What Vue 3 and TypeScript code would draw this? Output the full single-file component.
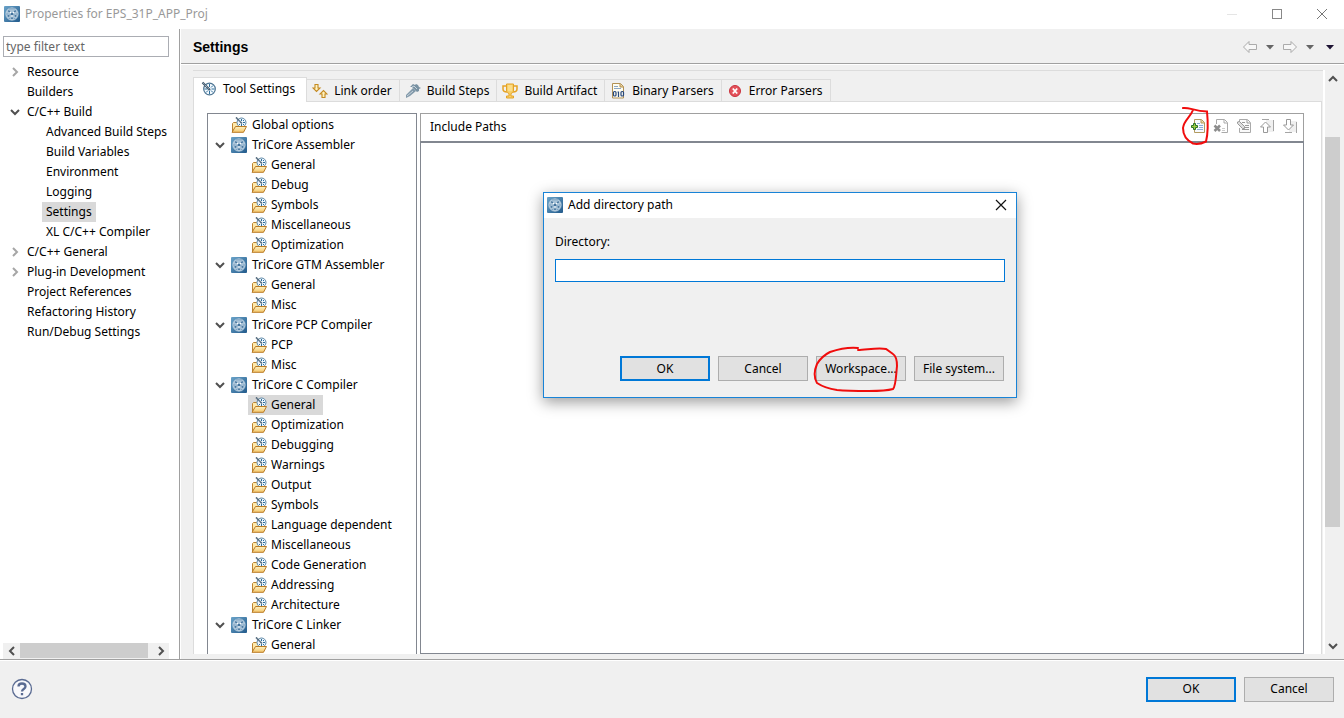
<script setup lang="ts">
import { ref } from 'vue'

interface NavItem {
  label: string
  level: 0 | 1
  state?: 'open' | 'closed'
}

interface ToolItem {
  label: string
  kind: 'root' | 'tool' | 'option'
  key: string
}

const navItems: NavItem[] = [
  { label: 'Resource', level: 0, state: 'closed' },
  { label: 'Builders', level: 0 },
  { label: 'C/C++ Build', level: 0, state: 'open' },
  { label: 'Advanced Build Steps', level: 1 },
  { label: 'Build Variables', level: 1 },
  { label: 'Environment', level: 1 },
  { label: 'Logging', level: 1 },
  { label: 'Settings', level: 1 },
  { label: 'XL C/C++ Compiler', level: 1 },
  { label: 'C/C++ General', level: 0, state: 'closed' },
  { label: 'Plug-in Development', level: 0, state: 'closed' },
  { label: 'Project References', level: 0 },
  { label: 'Refactoring History', level: 0 },
  { label: 'Run/Debug Settings', level: 0 },
]

const groups: [string, string[]][] = [
  ['TriCore Assembler', ['General', 'Debug', 'Symbols', 'Miscellaneous', 'Optimization']],
  ['TriCore GTM Assembler', ['General', 'Misc']],
  ['TriCore PCP Compiler', ['PCP', 'Misc']],
  [
    'TriCore C Compiler',
    [
      'General',
      'Optimization',
      'Debugging',
      'Warnings',
      'Output',
      'Symbols',
      'Language dependent',
      'Miscellaneous',
      'Code Generation',
      'Addressing',
      'Architecture',
    ],
  ],
  ['TriCore C Linker', ['General']],
]

const toolItems: ToolItem[] = [{ label: 'Global options', kind: 'root', key: 'global' }]
for (const [tool, options] of groups) {
  toolItems.push({ label: tool, kind: 'tool', key: tool })
  for (const option of options) {
    toolItems.push({ label: option, kind: 'option', key: `${tool}/${option}` })
  }
}

const tabs = [
  { label: 'Tool Settings', icon: 'gauge' },
  { label: 'Link order', icon: 'link-order' },
  { label: 'Build Steps', icon: 'steps' },
  { label: 'Build Artifact', icon: 'trophy' },
  { label: 'Binary Parsers', icon: 'binary' },
  { label: 'Error Parsers', icon: 'error' },
]

const pathActions = [
  { label: 'Add', icon: 'add', disabled: false },
  { label: 'Delete', icon: 'delete', disabled: true },
  { label: 'Edit', icon: 'edit', disabled: true },
  { label: 'Move up', icon: 'move-up', disabled: true },
  { label: 'Move down', icon: 'move-down', disabled: true },
]

const filter = ref('')
const directory = ref('')
const selectedPage = ref('Settings')
const selectedTool = ref('TriCore C Compiler/General')
const activeTab = ref('Tool Settings')
</script>

<template>
  <div class="window">
    <svg class="symbols" aria-hidden="true">
      <defs>
        <linearGradient id="chip-bg" x1="0" y1="0" x2="1" y2="1">
          <stop offset="0" stop-color="#6aa3c9" />
          <stop offset="1" stop-color="#225a8b" />
        </linearGradient>
        <linearGradient id="folder-bg" x1="0" y1="0" x2="0" y2="1">
          <stop offset="0" stop-color="#fff3c4" />
          <stop offset="1" stop-color="#f3c568" />
        </linearGradient>
      </defs>
      <symbol id="chip" viewBox="0 0 16 16">
        <rect width="16" height="16" rx="1" fill="url(#chip-bg)" />
        <circle cx="8" cy="8" r="6.2" fill="#a9c3d8" stroke="#c3d6e4" stroke-width=".7" />
        <g fill="none" stroke="#7fa3c2" stroke-width="1">
          <path d="M8 8 4 4M8 8l4-4M8 8l5 2M8 8l-5 2M8 8v5" />
          <path d="M5 2.8h6M2.2 8h2M12 8h2M4.5 13l2-1M11.500 13l-2-1" />
        </g>
        <g fill="#2f628f">
          <circle cx="8" cy="8" r="1" /><circle cx="5" cy="5.3" r=".8" /><circle cx="11" cy="5.3" r=".8" />
          <circle cx="4.6" cy="10" r=".8" /><circle cx="11.4" cy="10" r=".8" /><circle cx="8" cy="12.2" r=".8" />
        </g>
        <path d="M6 6.500h1M9 6.500h1M7 10h2" stroke="#fff" />
      </symbol>
      <symbol id="gauge" viewBox="0 0 16 16">
        <circle cx="8.500" cy="8" r="5.800" fill="#f4faff" stroke="#4e7593" stroke-width="1.200" />
        <path d="M8.500 3v3M8.500 10v3M3.500 8h3M10.500 8h3M5 11.500l2-2M12 4.500l-2 2M12 11.500l-2-2" stroke="#2f6f9b" stroke-width="1" />
        <path d="M1.500 1.500 9 9" stroke="#41586c" stroke-width="2.200" />
        <path d="M2.500 2.500 8 8" stroke="#dbe8f2" stroke-width="1" stroke-dasharray="1 1" />
      </symbol>
      <symbol id="folder" viewBox="0 0 16 16">
        <path d="M1.500 14V6.500l1-1h3l1 1H13V14z" fill="#ffe9ab" stroke="#ba8330" />
        <circle cx="10.500" cy="5.500" r="4.500" fill="#eef7ff" stroke="#5c86a5" stroke-width="1" />
        <path d="M10.500 2v2M10.500 7v2M12 5.500h2M13 3l-1 1M13 8l-1-1M8 8l1-1" stroke="#2f6f9b" />
        <path d="m5 .500 6 6" stroke="#41586c" stroke-width="1.600" />
        <path d="m6 1.500 5 5" stroke="#dbe8f2" stroke-width=".8" stroke-dasharray="1 1" />
        <path d="M1 15.300 4.500 9.500h11l-3 5.800z" fill="url(#folder-bg)" stroke="#ba7b25" />
      </symbol>
      <symbol id="link-order" viewBox="0 0 16 16">
        <g fill="#fff2bf" stroke="#c48a22" stroke-width="1.100">
          <path d="M3 1.500h3V5h2L4.500 8.500 1 5h2z" />
          <path d="M10 14.500h3V11h2l-3.500-3.500L8 11h2z" />
        </g>
      </symbol>
      <symbol id="steps" viewBox="0 0 16 16">
        <path d="M1 15v-3l7-7 3 3-6 5z" fill="#8299aa" />
        <path d="m5 4 3-3 2 1 1-1 2 1 1 2 2 1-2 1v2l-2 1-5-5z" fill="#7891a2" />
        <path d="m7 4 2-1 3 3M2 13l6-5" stroke="#c7d3dc" fill="none" />
      </symbol>
      <symbol id="trophy" viewBox="0 0 16 16">
        <path d="M4 3H1v3c0 2 1.500 3 4 3M12 3h3v3c0 2-1.500 3-4 3" fill="none" stroke="#e5a326" stroke-width="1.500" />
        <path d="M4.500 1h7v6c0 2-1 3-2.500 3.500V13h2.500v2h-7v-2H7v-2.500C5.500 10 4.500 9 4.500 7z" fill="#f7cf69" stroke="#e5a326" />
        <path d="M7 2v6M9 2v6" stroke="#ffebad" />
      </symbol>
      <symbol id="binary" viewBox="0 0 16 16">
        <path d="M2.500 15V.500h8l3 3V15z" fill="#fffdf0" stroke="#b29154" />
        <path d="M10 1v3h3.500" fill="#e6cc91" stroke="#b29154" />
        <path d="M4 3.500h4M4 5.500h7" stroke="#8aa6c7" />
        <g fill="none" stroke="#26477c" stroke-width="1.200">
          <rect x="3.500" y="8.500" width="2.500" height="4.500" rx="1" />
          <path d="M7.500 9h1v5" />
          <rect x="11" y="8.500" width="2.500" height="4.500" rx="1" />
        </g>
      </symbol>
      <symbol id="error" viewBox="0 0 16 16">
        <circle cx="8" cy="8" r="5.500" fill="#e4525b" stroke="#c9323d" />
        <path d="m5.800 5.500 4.400 5M10.200 5.500l-4.400 5" stroke="#fff" stroke-width="1.800" />
      </symbol>
      <symbol id="add" viewBox="0 0 16 16">
        <path d="M4.500 13.500V.500h7l3 3v10z" fill="#f7faff" stroke="#b29b60" />
        <path d="M11 1v3h3.500" fill="#eed79a" stroke="#b29b60" />
        <path d="M7 4.500h3M9 6.500h4M9 8.500h4M7 10.500h6" stroke="#8baed9" />
        <path d="M3.500 4.500h2v2h2v2h-2v2h-2v-2h-2v-2h2z" fill="#9ecb42" stroke="#287228" />
      </symbol>
      <symbol id="delete" viewBox="0 0 16 16">
        <path d="M3.500 5V.500h8l3 3v10h-6" fill="none" stroke="#aaa" />
        <path d="M11 1v3h3" fill="none" stroke="#aaa" />
        <path d="m1.500 6.500 5.500 5.500M7 6.500 1.500 12" stroke="#8d8d8d" stroke-width="2.500" />
        <path d="M9 9.500h3M9 11.500h3" stroke="#ccc" />
      </symbol>
      <symbol id="edit" viewBox="0 0 16 16">
        <path d="M3.500 3V.500h8l3 3v10h-11V9" fill="#fafafa" stroke="#aaa" />
        <path d="M11 1v3h3M6 3.500h3M9 6.500h4M9 8.500h4M6 10.500h7" fill="none" stroke="#999" />
        <path d="m1.500 3 2-.5 5 5v2h-2l-5-5z" fill="#ddd" stroke="#999" />
      </symbol>
      <symbol id="move-up" viewBox="0 0 16 16">
        <path d="M7 1h8v12H7z" fill="#f0f0f0" />
        <path d="M3 .500h7M14.500 1v11" stroke="#a5a5a5" />
        <path d="M4.500 13.500V8h-3l5-5 5 5h-3v5.500z" fill="#fff" stroke="#999" />
      </symbol>
      <symbol id="move-down" viewBox="0 0 16 16">
        <path d="M7 2h8v11H7z" fill="#f0f0f0" />
        <path d="M3 13.500h7M14.500 3v11" stroke="#a5a5a5" />
        <path d="M4.500 .500V6h-3l5 5 5-5h-3V.500z" fill="#fff" stroke="#999" />
      </symbol>
      <symbol id="chevron" viewBox="0 0 10 10">
        <path d="m1 3 4 4 4-4" fill="none" stroke="currentColor" stroke-width="2" />
      </symbol>
      <symbol id="arrow-left" viewBox="0 0 16 16">
        <path d="M1.500 8 7 2.500v3h7.500v5H7v3z" fill="#f7f7f7" stroke="#ababab" />
      </symbol>
      <symbol id="triangle" viewBox="0 0 10 6">
        <path d="M1 1h8L5 5.500z" fill="currentColor" />
      </symbol>
    </svg>

    <header class="title-bar">
      <svg class="icon"><use href="#chip" /></svg>
      <h1 class="window-title">Properties for EPS_31P_APP_Proj</h1>
      <div class="window-controls">
        <button class="plain control" aria-label="Minimize" disabled>
          <svg viewBox="0 0 12 12"><path d="M1 6.500h10" stroke="#e5e5e5" /></svg>
        </button>
        <button class="plain control" aria-label="Maximize">
          <svg viewBox="0 0 12 12"><rect x="1.500" y="1.500" width="9" height="9" fill="none" stroke="#888" /></svg>
        </button>
        <button class="plain control" aria-label="Close">
          <svg viewBox="0 0 12 12"><path d="m1 1 10 10M11 1 1 11" stroke="#777" /></svg>
        </button>
      </div>
    </header>

    <div class="body">
      <nav class="sidebar" aria-label="Property pages">
        <input v-model="filter" class="filter" type="text" placeholder="type filter text" aria-label="Filter pages" />
        <ul class="tree nav-tree">
          <li v-for="item in navItems" :key="item.label" class="row" :class="{ nested: item.level === 1 }">
            <span class="twist">
              <svg v-if="item.state" :class="['chevron', item.state]"><use href="#chevron" /></svg>
            </span>
            <button
              class="plain node"
              :class="{ selected: selectedPage === item.label }"
              @click="selectedPage = item.label"
            >
              {{ item.label }}
            </button>
          </li>
        </ul>
        <div class="h-scroll">
          <button class="plain scroll-button left" aria-label="Scroll left"><svg class="chevron"><use href="#chevron" /></svg></button>
          <div class="h-track"><div class="h-thumb"></div></div>
          <button class="plain scroll-button right" aria-label="Scroll right"><svg class="chevron"><use href="#chevron" /></svg></button>
        </div>
      </nav>

      <main class="main">
        <div class="page-header">
          <h2 class="page-title">Settings</h2>
          <div class="history">
            <button class="plain" aria-label="Back"><svg class="icon"><use href="#arrow-left" /></svg></button>
            <button class="plain drop" aria-label="Back history"><svg class="triangle"><use href="#triangle" /></svg></button>
            <button class="plain" aria-label="Forward"><svg class="icon flipped"><use href="#arrow-left" /></svg></button>
            <button class="plain drop" aria-label="Forward history"><svg class="triangle"><use href="#triangle" /></svg></button>
            <button class="plain drop menu" aria-label="View menu"><svg class="triangle"><use href="#triangle" /></svg></button>
          </div>
        </div>

        <div class="page-scroll">
          <div class="page">
            <div class="tabs" role="tablist">
              <button
                v-for="tab in tabs"
                :key="tab.label"
                class="plain tab"
                :class="{ active: activeTab === tab.label }"
                role="tab"
                :aria-selected="activeTab === tab.label"
                @click="activeTab = tab.label"
              >
                <svg class="icon"><use :href="'#' + tab.icon" /></svg>
                <span>{{ tab.label }}</span>
              </button>
              <div class="tab-rest"></div>
            </div>

            <div class="panel">
              <ul class="tree tool-tree">
                <li v-for="item in toolItems" :key="item.key" class="row" :class="{ nested: item.kind === 'option' }">
                  <span class="twist">
                    <svg v-if="item.kind === 'tool'" class="chevron open"><use href="#chevron" /></svg>
                  </span>
                  <button
                    class="plain node"
                    :class="{ selected: selectedTool === item.key }"
                    @click="selectedTool = item.key"
                  >
                    <svg class="icon"><use :href="item.kind === 'tool' ? '#chip' : '#folder'" /></svg>
                    <span>{{ item.label }}</span>
                  </button>
                </li>
              </ul>

              <section class="paths">
                <div class="paths-header">
                  <h3 class="paths-title">Include Paths</h3>
                  <div class="path-actions">
                    <button
                      v-for="action in pathActions"
                      :key="action.icon"
                      class="plain path-action"
                      :aria-label="action.label"
                      :disabled="action.disabled"
                    >
                      <svg class="icon"><use :href="'#' + action.icon" /></svg>
                      <svg v-if="action.icon === 'add'" class="mark mark-add" viewBox="0 0 32 44" aria-hidden="true">
                        <path d="M2 3C8 2 13 6 26 6.500c1 10 1 22-1 30-4 2-9 3-13 2C5 35 2 29 2 23 3 15 9 13 12 5" />
                      </svg>
                    </button>
                  </div>
                </div>
                <div class="paths-list"></div>
              </section>
            </div>
          </div>
          <div class="v-scroll">
            <button class="plain v-button up" aria-label="Scroll up"><svg class="chevron"><use href="#chevron" /></svg></button>
            <div class="v-track"><div class="v-thumb"></div></div>
            <button class="plain v-button" aria-label="Scroll down"><svg class="chevron"><use href="#chevron" /></svg></button>
          </div>
        </div>
      </main>
    </div>

    <footer class="footer">
      <button class="plain" aria-label="Help">
        <svg class="help" viewBox="0 0 22 22">
          <circle cx="11" cy="11" r="9.500" fill="#f8f8fb" stroke="#5a6b92" stroke-width="1.300" />
          <path d="M7.500 8.500c0-4 7-4 7 0 0 2.500-3.500 2.500-3.500 5M11 15v2.200" fill="none" stroke="#5a6b92" stroke-width="2.300" />
        </svg>
      </button>
      <div class="buttons">
        <button class="button primary">OK</button>
        <button class="button">Cancel</button>
      </div>
    </footer>

    <section class="dialog" role="dialog" aria-labelledby="dialog-title">
      <header class="dialog-bar">
        <svg class="icon"><use href="#chip" /></svg>
        <h2 id="dialog-title" class="dialog-title">Add directory path</h2>
        <button class="plain dialog-close" aria-label="Close dialog">
          <svg viewBox="0 0 12 12"><path d="m1 1 10 10M11 1 1 11" stroke="#111" stroke-width="1.200" /></svg>
        </button>
      </header>
      <div class="dialog-body">
        <label class="dialog-label" for="directory">Directory:</label>
        <input id="directory" v-model="directory" class="dialog-input" type="text" />
        <div class="buttons dialog-buttons">
          <button class="button primary">OK</button>
          <button class="button">Cancel</button>
          <button class="button workspace">
            Workspace...
            <svg class="mark mark-workspace" viewBox="0 0 90 50" aria-hidden="true">
              <path d="M46 3C36 2 27 4 18 7 12 10 8 14 5 19 2 26 2 33 5 38c6 4 13 6 20 7 10 1 22 1 32 1 9 0 17 0 24-2 3-3 3-14 4-23 0-5-1-10-4-12l-7-5c-8-2-20 1-28 1" />
            </svg>
          </button>
          <button class="button">File system...</button>
        </div>
      </div>
    </section>
  </div>
</template>

<style>
body {
  margin: 0;
}
</style>

<style scoped>
.window {
  position: relative;
  display: flex;
  flex-direction: column;
  height: 100vh;
  overflow: hidden;
  background: #f0f0f0;
  color: #000;
  font: 12px/20px "Noto Sans", "Open Sans", sans-serif;
}
.window * {
  box-sizing: border-box;
}
.symbols {
  position: absolute;
  width: 0;
  height: 0;
}
.plain {
  padding: 0;
  border: 0;
  background: none;
  color: inherit;
  font: inherit;
}
svg {
  display: block;
}
.icon {
  flex: none;
  width: 16px;
  height: 16px;
}
h1,
h2,
h3 {
  margin: 0;
  font: inherit;
}

.title-bar {
  display: flex;
  flex: none;
  align-items: center;
  height: 29px;
  padding: 0 0 2px 4px;
  background: #fff;
}
.window-title {
  margin-left: 5px;
  color: #999;
}
.window-controls {
  display: flex;
  margin-left: auto;
}
.control {
  display: grid;
  place-items: center;
  width: 45px;
  height: 26px;
}
.control svg {
  width: 12px;
  height: 12px;
}

.body {
  display: flex;
  flex: 1;
  min-height: 0;
}
.sidebar {
  display: flex;
  flex: none;
  flex-direction: column;
  width: 180px;
  padding: 7px 10px 0 3px;
  border-right: 1px solid #a0a0a0;
  background: #fff;
}
.filter {
  flex: none;
  width: 100%;
  height: 21px;
  margin-bottom: 5px;
  padding: 0 2px;
  border: 1px solid #abadb3;
  outline: none;
  background: #fff;
  font: inherit;
}
.filter::placeholder {
  color: #666;
  opacity: 1;
}
.tree {
  margin: 0;
  padding: 0;
  overflow: hidden;
  list-style: none;
}
.nav-tree {
  flex: 1;
  padding-left: 3px;
}
.row {
  display: flex;
  height: 20px;
  white-space: nowrap;
}
.twist {
  display: grid;
  flex: none;
  place-items: center;
  width: 17px;
}
.chevron {
  width: 10px;
  height: 10px;
  color: #505050;
}
.chevron.closed {
  color: #a6a6a6;
  transform: rotate(-90deg);
}
.node {
  display: flex;
  flex: none;
  align-items: center;
  gap: 5px;
  padding: 0 4px;
}
.node.selected {
  background: #d9d9d9;
}
.nav-tree .nested {
  padding-left: 19px;
}
.h-scroll {
  display: flex;
  flex: none;
  height: 16px;
  background: #f0f0f0;
}
.scroll-button {
  display: grid;
  place-items: center;
  width: 17px;
}
.left .chevron {
  transform: rotate(90deg);
}
.right .chevron {
  transform: rotate(-90deg);
}
.h-track {
  flex: 1;
}
.h-thumb {
  width: 97%;
  height: 15px;
  background: #cdcdcd;
}

.main {
  display: flex;
  flex: 1;
  flex-direction: column;
  min-width: 0;
  border-left: 1px solid #fff;
}
.page-header {
  display: flex;
  flex: none;
  align-items: center;
  justify-content: space-between;
  height: 36px;
  padding: 0 6px 0 12px;
  border-bottom: 1px solid #fff;
  box-shadow: inset 0 -1px #a0a0a0;
}
.page-title {
  font: bold 14px/20px "Liberation Sans", Arial, sans-serif;
}
.history {
  display: flex;
  align-items: center;
}
.drop {
  display: grid;
  place-items: center;
  width: 24px;
  height: 16px;
  color: #666;
}
.drop.menu {
  width: 16px;
  color: #1d1233;
}
.triangle {
  width: 10px;
  height: 6px;
}
.flipped {
  transform: scaleX(-1);
}
.page-scroll {
  display: flex;
  flex: 1;
  min-height: 0;
  padding: 5px 4px 5px 12px;
}
.page {
  display: flex;
  flex: 1;
  flex-direction: column;
  min-width: 0;
  padding: 6px 1px 0 0;
  border-top: 1px solid #dcdcdc;
}
.tabs {
  display: flex;
  flex: none;
  align-items: flex-end;
  height: 25px;
}
.tab {
  display: flex;
  align-items: center;
  gap: 6px;
  height: 23px;
  padding: 0 7px 0 5px;
  border: solid #dcdcdc;
  border-width: 1px 1px 1px 0;
  white-space: nowrap;
}
.tab.active {
  height: 25px;
  padding: 0 11px 2px 7px;
  border-width: 1px 1px 0 1px;
  background: #fff;
}
.tab-rest {
  flex: 1;
  height: 1px;
  background: #dcdcdc;
}
.panel {
  display: flex;
  flex: 1;
  gap: 3px;
  min-height: 0;
  padding: 11px 17px 0 13px;
  border: solid #dcdcdc;
  border-width: 0 1px;
  background: #fff;
}
.tool-tree {
  flex: none;
  width: 210px;
  padding: 1px 0 0 3px;
  border: 1px solid #828790;
  border-bottom: 0;
}
.tool-tree .node {
  padding: 0 8px 0 3px;
}
.tool-tree .nested {
  padding-left: 20px;
}
.tool-tree .nested .node {
  gap: 4px;
}
.paths {
  display: flex;
  flex: 1;
  flex-direction: column;
  min-width: 0;
}
.paths-header {
  display: flex;
  align-items: center;
  justify-content: space-between;
  height: 28px;
  padding: 0 5px 2px 9px;
  border: 1px solid #a0a0a0;
  border-bottom: 0;
}
.path-actions {
  display: flex;
  gap: 7px;
}
.path-action {
  position: relative;
}
.paths-list {
  flex: 1;
  border: 1px solid #828790;
  border-top-width: 2px;
}
.v-scroll {
  display: flex;
  flex: none;
  flex-direction: column;
  width: 17px;
  border-left: 2px solid #fff;
}
.v-button {
  display: grid;
  place-items: center;
  height: 17px;
}
.up .chevron {
  transform: rotate(180deg);
}
.v-track {
  flex: 1;
  padding-top: 50px;
}
.v-thumb {
  height: 78%;
  background: #cdcdcd;
}

.footer {
  display: flex;
  flex: none;
  align-items: center;
  justify-content: space-between;
  height: 59px;
  padding: 0 10px 0 11px;
  border-top: 1px solid #a0a0a0;
  box-shadow: inset 0 1px #fff;
}
.help {
  width: 22px;
  height: 22px;
}
.buttons {
  display: flex;
  gap: 8px;
}
.button {
  width: 90px;
  height: 25px;
  padding: 0;
  border: 1px solid #adadad;
  background: #e1e1e1;
  color: #000;
  font: inherit;
  white-space: nowrap;
}
.button.primary {
  border: 2px solid #0078d7;
}

.dialog {
  position: absolute;
  top: 192px;
  left: 543px;
  width: 474px;
  border: 1px solid #1883d7;
  background: #f0f0f0;
  box-shadow: 0 4px 14px rgba(0, 0, 0, 0.4);
}
.dialog-bar {
  display: flex;
  align-items: center;
  height: 25px;
  padding: 0 9px 1px 3px;
  background: #fff;
}
.dialog-title {
  margin-left: 5px;
}
.dialog-close {
  margin-left: auto;
}
.dialog-close svg {
  width: 12px;
  height: 12px;
}
.dialog-body {
  display: flex;
  flex-direction: column;
  padding: 14px 11px 16px;
}
.dialog-input {
  height: 23px;
  margin-top: 7px;
  padding: 0 4px;
  border: 1px solid #0078d7;
  outline: none;
  background: #fff;
  font: inherit;
}
.dialog-buttons {
  justify-content: flex-end;
  margin-top: 74px;
  padding-right: 1px;
}
.workspace {
  position: relative;
}
.mark {
  position: absolute;
  overflow: visible;
  fill: none;
  stroke: #f00d0d;
  stroke-width: 2;
  stroke-linecap: round;
  pointer-events: none;
}
.mark-add {
  top: -14px;
  left: -9px;
  width: 32px;
  height: 44px;
}
.mark-workspace {
  top: -12px;
  left: -5px;
  width: 90px;
  height: 50px;
}
</style>
